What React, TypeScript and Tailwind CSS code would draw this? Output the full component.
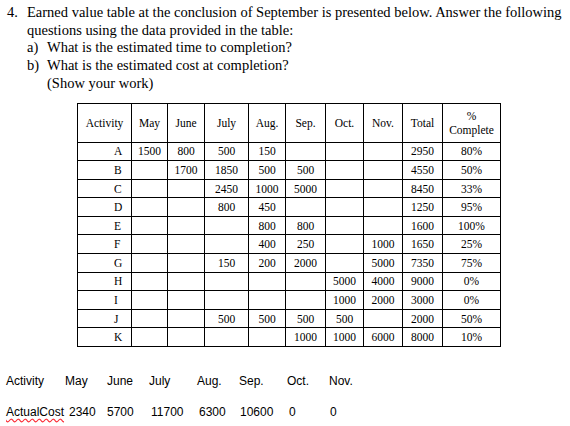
import React from "react"

const months = ["May", "June", "July", "Aug.", "Sep.", "Oct.", "Nov."]

const rows: [string, ...string[]][] = [
  ["A", "1500", "800", "500", "150", "", "", "", "2950", "80%"],
  ["B", "", "1700", "1850", "500", "500", "", "", "4550", "50%"],
  ["C", "", "", "2450", "1000", "5000", "", "", "8450", "33%"],
  ["D", "", "", "800", "450", "", "", "", "1250", "95%"],
  ["E", "", "", "", "800", "800", "", "", "1600", "100%"],
  ["F", "", "", "", "400", "250", "", "1000", "1650", "25%"],
  ["G", "", "", "150", "200", "2000", "", "5000", "7350", "75%"],
  ["H", "", "", "", "", "", "5000", "4000", "9000", "0%"],
  ["I", "", "", "", "", "", "1000", "2000", "3000", "0%"],
  ["J", "", "", "500", "500", "500", "500", "", "2000", "50%"],
  ["K", "", "", "", "", "1000", "1000", "6000", "8000", "10%"],
]

const colW = [
  "w-[54px]",
  "w-[36px]",
  "w-[37px]",
  "w-[44px]",
  "w-[37px]",
  "w-[40px]",
  "w-[38px]",
  "w-[39px]",
  "w-[40px]",
  "w-[58px]",
]

const cost = [
  ["Activity", "ActualCost"],
  ["May", "2340"],
  ["June", "5700"],
  ["July", "11700"],
  ["Aug.", "6300"],
  ["Sep.", "10600"],
  ["Oct.", "0"],
  ["Nov.", "0"],
]

const topW = ["w-[59px]", "w-[42px]", "w-[42px]", "w-[48px]", "w-[42px]", "w-[48px]", "w-[42px]", "w-[42px]"]
const botW = ["w-[63px]", "w-[38px]", "w-[44px]", "w-[48px]", "w-[41px]", "w-[49px]", "w-[41px]", "w-[41px]"]

export default function App() {
  return (
    <div className="w-[570px] h-[426px] bg-white text-black overflow-hidden">
      {/* question */}
      <div className="pt-[4px] pl-[7px] font-['Liberation_Serif',serif] text-[14.5px] leading-[17.7px]">
        <div className="flex">
          <span className="w-[20px] shrink-0">4.</span>
          <span className="whitespace-nowrap">
            Earned value table at the conclusion of September is presented below. Answer the following
          </span>
        </div>
        <div className="pl-[20px]">questions using the data provided in the table:</div>
        <div className="flex pl-[20px]">
          <span className="w-[20px]">a)</span>
          <span>What is the estimated time to completion?</span>
        </div>
        <div className="flex pl-[20px]">
          <span className="w-[20px]">b)</span>
          <span>What is the estimated cost at completion?</span>
        </div>
        <div className="pl-[40px]">(Show your work)</div>
      </div>

      {/* table */}
      <div className="pl-[77px] pt-[10px]">
        <table className="table-fixed border-collapse font-['Liberation_Serif',serif] text-[11.5px] leading-[14px]">
          <thead>
            <tr className="h-[39px]">
              <th className={`${colW[0]} border border-black font-normal text-center`}>Activity</th>
              {months.map((m, i) => (
                <th key={m} className={`${colW[i + 1]} border border-black font-normal text-center`}>
                  {m}
                </th>
              ))}
              <th className={`${colW[8]} border border-black font-normal text-center`}>Total</th>
              <th className={`${colW[9]} border border-black font-normal text-center`}>
                %<br />
                Complete
              </th>
            </tr>
          </thead>
          <tbody>
            {rows.map((r) => (
              <tr key={r[0]} className="h-[18.6px]">
                <td className="border border-black text-left pl-[36px]">{r[0]}</td>
                {r.slice(1).map((v, j) => (
                  <td key={j} className="border border-black text-center p-0">
                    {v}
                  </td>
                ))}
              </tr>
            ))}
          </tbody>
        </table>
      </div>

      {/* actual cost */}
      <div className="pl-[6px] pt-[27px] font-['Liberation_Sans',sans-serif] text-[12px] leading-[14px]">
        <div className="flex">
          {cost.map((c, i) => (
            <span key={c[0]} className={`${topW[i]} shrink-0`}>
              {c[0]}
            </span>
          ))}
        </div>
        <div className="flex mt-[17px]">
          {cost.map((c, i) => (
            <span
              key={c[0]}
              className={`${botW[i]} shrink-0 ${
                i === 0 ? "underline decoration-wavy decoration-red-500 underline-offset-2" : ""
              }`}
            >
              {c[1]}
            </span>
          ))}
        </div>
      </div>
    </div>
  )
}
